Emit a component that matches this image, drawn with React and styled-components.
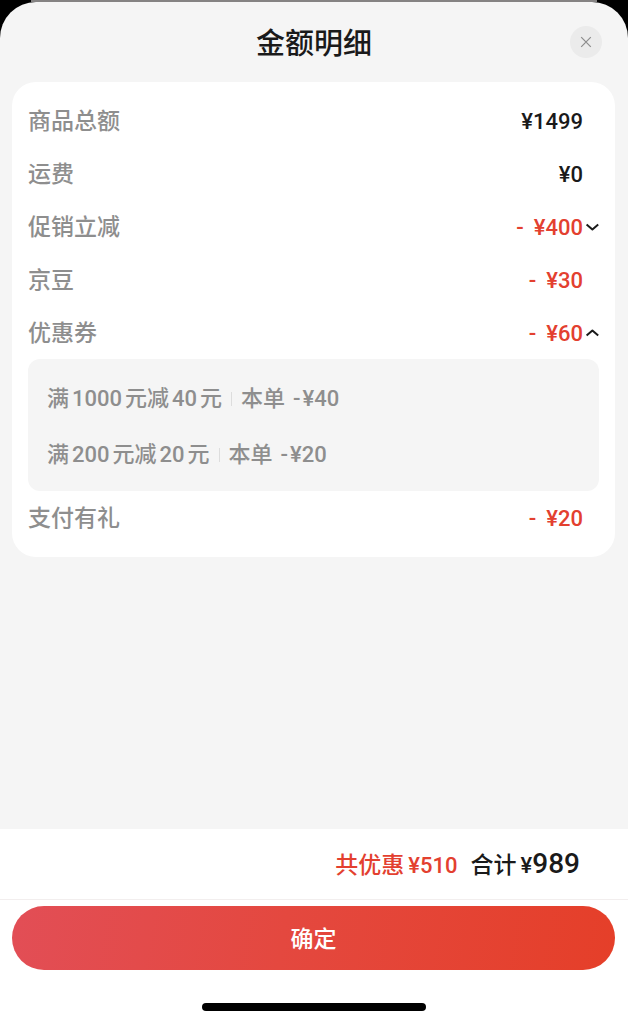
import React, { useState } from "react";
import styled, { createGlobalStyle } from "styled-components";

const GlobalStyle = createGlobalStyle`
  *, *::before, *::after { box-sizing: border-box; }
  body {
    margin: 0;
    background: #000;
    color: #1a1a1a;
    font-family: Roboto, "Noto Sans CJK SC", sans-serif;
    font-size: 22px;
    line-height: 32px;
  }
  button { font: inherit; border: 0; padding: 0; cursor: pointer; }
`;

const Screen = styled.div`
  display: flex;
  flex-direction: column;
  min-height: 100vh;
`;

const Backdrop = styled.div`
  height: 2px;
  margin: 0 31px;
  background: #858383;
`;

const Sheet = styled.main`
  flex: 1;
  display: flex;
  flex-direction: column;
  overflow: hidden;
  border-radius: 36px 36px 0 0;
  background: #f5f5f5;
`;

const Header = styled.header`
  display: grid;
  grid-template-columns: 32px 1fr 32px;
  align-items: center;
  height: 80px;
  padding: 0 26px;
`;

const Title = styled.h1`
  grid-column: 2;
  margin: 0;
  padding-top: 3px;
  font-size: 29px;
  font-weight: 500;
  line-height: 40px;
  text-align: center;
`;

const CloseButton = styled.button`
  display: flex;
  align-items: center;
  justify-content: center;
  width: 32px;
  height: 32px;
  border-radius: 50%;
  background: #ebebeb;
  color: #8c8c8c;
`;

const Card = styled.section`
  margin: 0 13px 0 12px;
  padding: 12px 16px 13px;
  border-radius: 24px;
  background: #fff;
`;

const Row = styled.div`
  display: flex;
  align-items: center;
  height: 53px;
  padding-top: 3px;
`;

const Label = styled.span`
  flex: 1;
  font-size: 23px;
  font-weight: 500;
  color: #8e8e8e;
`;

const Amount = styled.span`
  display: flex;
  gap: 10px;
  font-weight: 500;
  color: ${(p) => (p.$discount ? "#e3402f" : "#1a1a1a")};
`;

const Slot = styled.span`
  display: flex;
  width: 16px;
  justify-content: flex-end;
`;

const Toggle = styled.button`
  display: flex;
  background: none;
  color: #1a1a1a;
`;

const CouponPanel = styled.ul`
  margin: 0;
  padding: 10px 19px;
  border-radius: 12px;
  background: #f5f5f5;
  list-style: none;
`;

const Coupon = styled.li`
  display: flex;
  align-items: center;
  height: 56px;
  padding-top: 3px;
  font-weight: 500;
  color: #8e8e8e;
`;

const Num = styled.span`
  margin: 0 3px;
`;

const Divider = styled.span`
  width: 1px;
  height: 14px;
  margin: 0 9px;
  background: #ddd;
`;

const Saving = styled.span`
  display: flex;
  gap: 2px;
  margin-left: 8px;
`;

const Footer = styled.footer`
  margin-top: auto;
  background: #fff;
`;

const Summary = styled.div`
  display: flex;
  align-items: baseline;
  justify-content: flex-end;
  gap: 13px;
  height: 71px;
  padding: 15px 48px 0 12px;
  border-bottom: 1px solid #f2eeee;
  line-height: 40px;
`;

const SummaryItem = styled.span`
  display: flex;
  align-items: baseline;
  gap: 4px;
  font-size: 23px;
  font-weight: 500;
  color: ${(p) => (p.$discount ? "#e3402f" : "#1a1a1a")};
`;

const SummaryPrice = styled.span`
  font-size: 22px;
`;

const Total = styled.span`
  font-size: 28px;
`;

const Actions = styled.div`
  padding: 6px 13px 0 12px;
`;

const ConfirmButton = styled.button`
  display: block;
  width: 100%;
  height: 64px;
  padding-top: 3px;
  border-radius: 32px;
  background: linear-gradient(100deg, #e24e56 0%, #e4483f 45%, #e53f29 100%);
  color: #fff;
  font-size: 23px;
  font-weight: 500;
`;

const HomeIndicator = styled.div`
  width: 224px;
  height: 8px;
  margin: 33px auto 13px;
  border-radius: 4px;
  background: #000;
`;

function CloseIcon() {
  return (
    <svg width="12" height="12" viewBox="0 0 12 12" fill="none" stroke="currentColor" strokeWidth="1.2" aria-hidden="true">
      <path d="M1.2 1.2 10.8 10.8M10.8 1.2 1.2 10.8" />
    </svg>
  );
}

function Chevron({ up }) {
  return (
    <svg width="14" height="10" viewBox="0 0 14 10" fill="none" stroke="currentColor" strokeWidth="2" strokeLinejoin="round" aria-hidden="true">
      <path d={up ? "M1.6 6.6 7.4 1.6 13.2 6.6" : "M1.6 1.4 7.4 6.4 13.2 1.4"} />
    </svg>
  );
}

function PriceRow({ label, value, discount, open, onToggle }) {
  return (
    <Row>
      <Label>{label}</Label>
      <Amount $discount={discount}>
        {discount && <span>-</span>}
        <span>¥{value}</span>
      </Amount>
      <Slot>
        {onToggle && (
          <Toggle type="button" aria-label={label} aria-expanded={open} onClick={onToggle}>
            <Chevron up={open} />
          </Toggle>
        )}
      </Slot>
    </Row>
  );
}

const coupons = [
  { threshold: 1000, off: 40 },
  { threshold: 200, off: 20 },
];

export default function App() {
  const [promoOpen, setPromoOpen] = useState(false);
  const [couponOpen, setCouponOpen] = useState(true);

  return (
    <>
      <GlobalStyle />
      <Screen>
        <Backdrop />
        <Sheet>
          <Header>
            <Title>金额明细</Title>
            <CloseButton type="button" aria-label="关闭">
              <CloseIcon />
            </CloseButton>
          </Header>
          <Card>
            <PriceRow label="商品总额" value={1499} />
            <PriceRow label="运费" value={0} />
            <PriceRow label="促销立减" value={400} discount open={promoOpen} onToggle={() => setPromoOpen(!promoOpen)} />
            <PriceRow label="京豆" value={30} discount />
            <PriceRow label="优惠券" value={60} discount open={couponOpen} onToggle={() => setCouponOpen(!couponOpen)} />
            {couponOpen && (
              <CouponPanel>
                {coupons.map((c) => (
                  <Coupon key={c.threshold}>
                    满<Num>{c.threshold}</Num>元减<Num>{c.off}</Num>元
                    <Divider />
                    本单
                    <Saving>
                      <span>-</span>
                      <span>¥{c.off}</span>
                    </Saving>
                  </Coupon>
                ))}
              </CouponPanel>
            )}
            <PriceRow label="支付有礼" value={20} discount />
          </Card>
          <Footer>
            <Summary>
              <SummaryItem $discount>
                共优惠<SummaryPrice>¥510</SummaryPrice>
              </SummaryItem>
              <SummaryItem>
                合计
                <span>
                  <SummaryPrice>¥</SummaryPrice>
                  <Total>989</Total>
                </span>
              </SummaryItem>
            </Summary>
            <Actions>
              <ConfirmButton type="button">确定</ConfirmButton>
            </Actions>
            <HomeIndicator />
          </Footer>
        </Sheet>
      </Screen>
    </>
  );
}
